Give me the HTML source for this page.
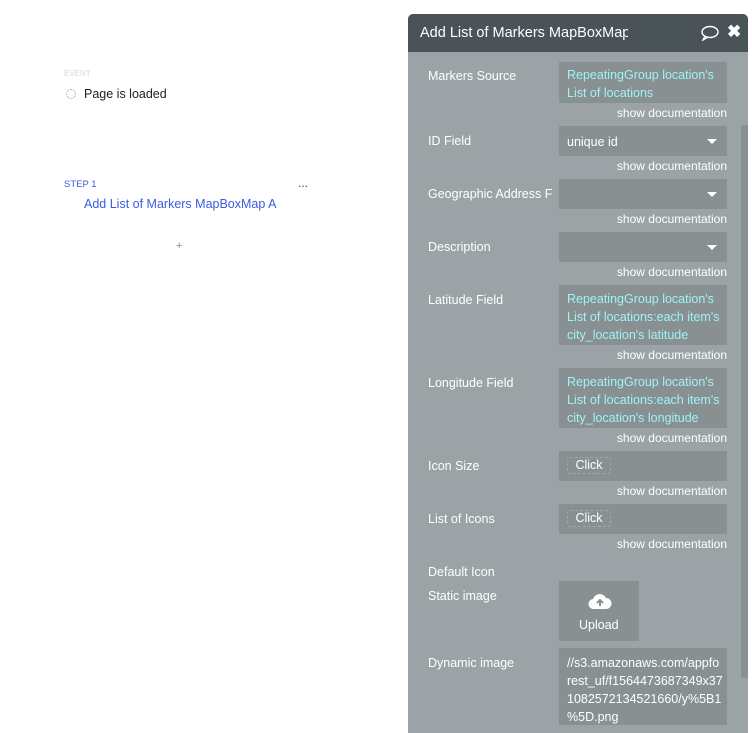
<!DOCTYPE html>
<html><head><meta charset="utf-8"><style>
*{margin:0;padding:0;box-sizing:border-box}
body{width:752px;height:733px;background:#fff;font-family:"Liberation Sans",sans-serif;font-size:12.5px;position:relative;overflow:hidden}
.a{position:absolute;white-space:nowrap}
.p{position:absolute;left:408px;top:14px;width:340px;height:719px;background:#9ca3a7;border-radius:5px 5px 0 0;overflow:hidden}
.h{position:absolute;left:0;top:0;width:340px;height:38px;background:#4a5357;color:#fff;font-size:14.5px}
.l{position:absolute;left:20px;color:#fff;font-size:12.5px;margin-top:1px}
.b{position:absolute;left:151px;width:168px;background:#899092;border-radius:1px}
.t{position:absolute;left:8px;color:#9ff3f5;line-height:18px;font-size:12.5px;margin-top:1px}
.w{color:#fff}
.d{position:absolute;right:21px;color:#fff;font-size:12px;margin-top:1px}
.ar{position:absolute;right:10px;top:13px;width:0;height:0;border-left:5px solid transparent;border-right:5px solid transparent;border-top:5px solid #fff}
.c{position:absolute;left:8px;top:6px;width:44px;height:17px;border:1px dashed #a2a8aa;border-radius:3px;color:#fff;text-align:center;line-height:15px}
</style></head><body>
<div class="a" style="left:64px;top:69px;font-size:8px;color:#d8d8d8">EVENT</div>
<div class="a" style="left:66px;top:89px;width:10px;height:10px;border:1px dotted #999;border-radius:50%"></div>
<div class="a" style="left:84px;top:87px;font-size:12.5px;color:#222">Page is loaded</div>
<div class="a" style="left:64px;top:179px;font-size:9.5px;color:#3a5be0">STEP 1</div>
<div class="a" style="left:298px;top:176px;font-size:12px;color:#444">...</div>
<div class="a" style="left:84px;top:197px;font-size:12.5px;color:#3a5be0">Add List of Markers MapBoxMap A</div>
<div class="a" style="left:176px;top:240px;font-size:11px;color:#888">+</div>
<div class="p">
<div class="h"><div class="a" style="left:12px;top:11px;width:208px;overflow:hidden">Add List of Markers MapBoxMap</div>
<svg class="a" style="left:292px;top:11px" width="20" height="16" viewBox="0 0 20 16"><ellipse cx="10" cy="7" rx="8" ry="5.5" fill="none" stroke="#fff" stroke-width="1.4"/><path d="M5 11 L3 15 L8 12" fill="none" stroke="#fff" stroke-width="1.4"/></svg>
<div class="a" style="left:319px;top:8px;font-size:17px;font-weight:bold;color:#fff">✖</div></div>
<div class="a" style="left:333px;top:111px;width:7px;height:553px;background:#8a9193"></div>
<div class="l" style="top:54px">Markers Source</div>
<div class="b" style="top:48px;height:41px"><div class="t" style="top:3px">RepeatingGroup location's<br>List of locations</div></div>
<div class="d" style="top:91px">show documentation</div>
<div class="l" style="top:119px">ID Field</div>
<div class="b" style="top:112px;height:30px"><div class="t w" style="top:6px">unique id</div><div class="ar"></div></div>
<div class="d" style="top:144px">show documentation</div>
<div class="l" style="top:172px">Geographic Address F</div>
<div class="b" style="top:165px;height:30px"><div class="ar"></div></div>
<div class="d" style="top:197px">show documentation</div>
<div class="l" style="top:225px">Description</div>
<div class="b" style="top:218px;height:30px"><div class="ar"></div></div>
<div class="d" style="top:250px">show documentation</div>
<div class="l" style="top:278px">Latitude Field</div>
<div class="b" style="top:271px;height:60px"><div class="t" style="top:4px">RepeatingGroup location's<br>List of locations:each item's<br>city_location's latitude</div></div>
<div class="d" style="top:333px">show documentation</div>
<div class="l" style="top:361px">Longitude Field</div>
<div class="b" style="top:354px;height:60px"><div class="t" style="top:4px">RepeatingGroup location's<br>List of locations:each item's<br>city_location's longitude</div></div>
<div class="d" style="top:416px">show documentation</div>
<div class="l" style="top:444px">Icon Size</div>
<div class="b" style="top:437px;height:30px"><div class="c">Click</div></div>
<div class="d" style="top:469px">show documentation</div>
<div class="l" style="top:497px">List of Icons</div>
<div class="b" style="top:490px;height:30px"><div class="c">Click</div></div>
<div class="d" style="top:522px">show documentation</div>
<div class="l" style="top:550px">Default Icon</div>
<div class="l" style="top:574px">Static image</div>
<div class="b" style="top:567px;height:60px;width:80px">
<svg class="a" style="left:29px;top:11px" width="24" height="18" viewBox="0 0 24 18"><path d="M6 17 A5 5 0 0 1 5 7 A7 7 0 0 1 18 6 A5.5 5.5 0 0 1 18 17 Z" fill="#fff"/><path d="M12 14 V9 M9 11 L12 8 L15 11" stroke="#899092" stroke-width="2" fill="none"/></svg>
<div class="a" style="left:20px;top:37px;color:#fff;font-size:12.5px">Upload</div></div>
<div class="l" style="top:641px">Dynamic image</div>
<div class="b" style="top:634px;height:77px"><div class="t w" style="top:5px">//s3.amazonaws.com/appfo<br>rest_uf/f1564473687349x37<br>1082572134521660/y%5B1<br>%5D.png</div></div>
</div>
</body></html>
